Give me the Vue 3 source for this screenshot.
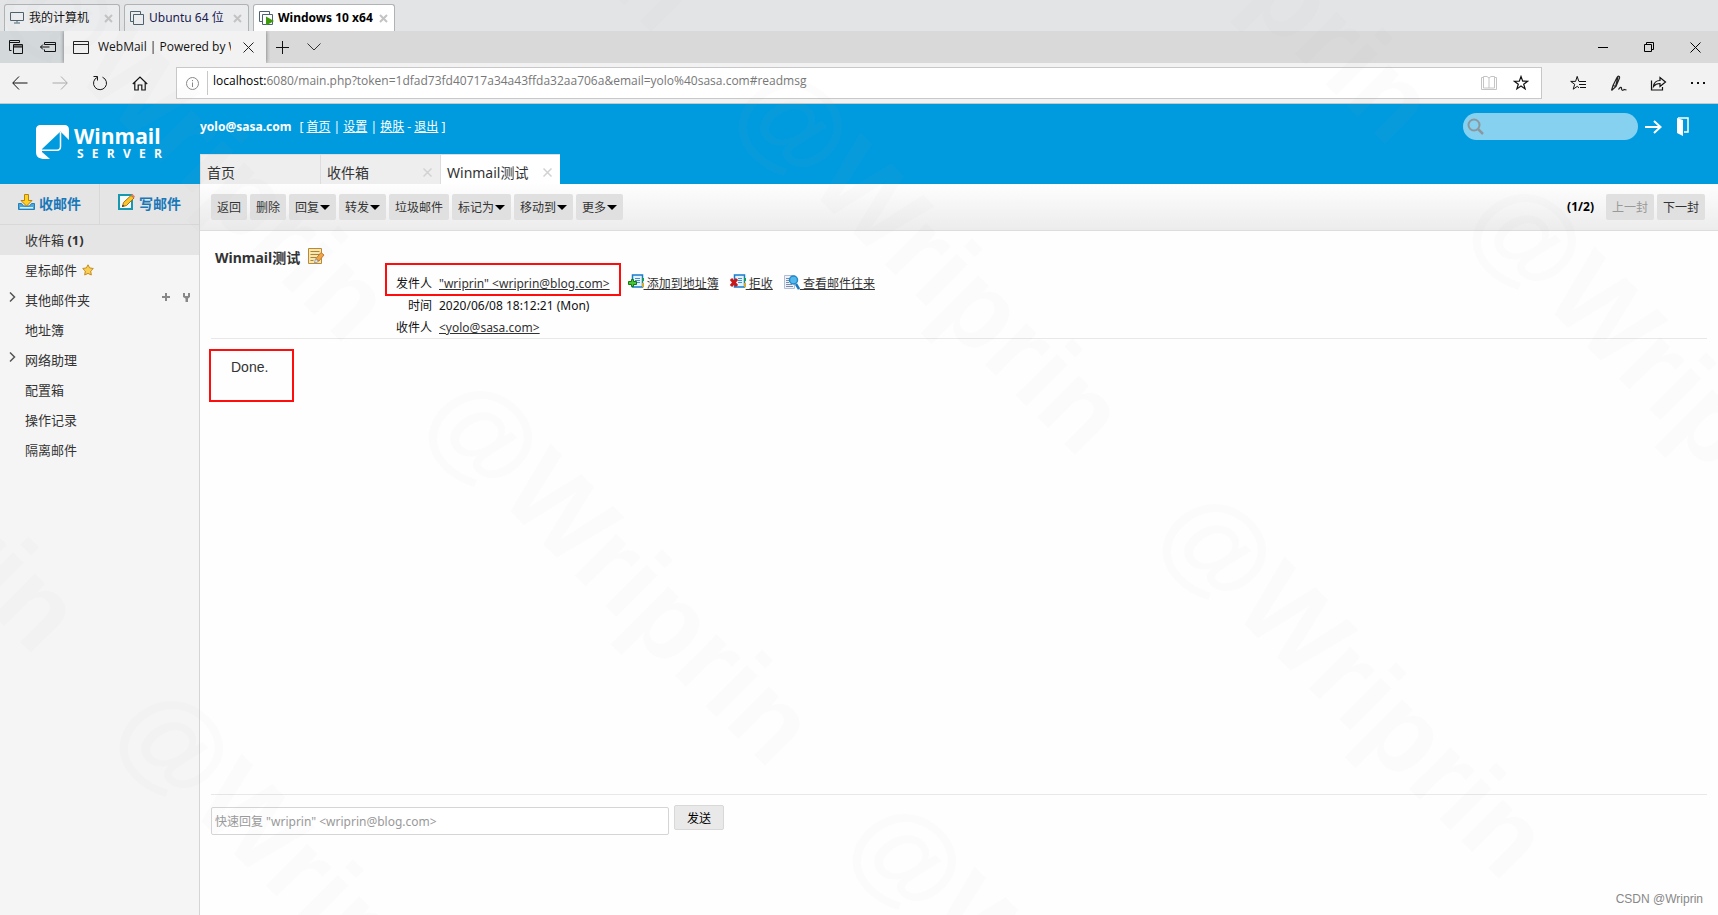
<script setup>

import { ref } from 'vue';

const vmTabs = [
    { name: '我的计算机', icon: 'monitor' },
    { name: 'Ubuntu 64 位', icon: 'vm' },
    { name: 'Windows 10 x64', icon: 'running', active: true }
];

const mailTabs = [
    { name: '首页' },
    { name: '收件箱', closable: true },
    { name: 'Winmail测试', closable: true, active: true }
];

const actions = [
    { name: '返回' },
    { name: '删除' },
    { name: '回复', menu: true },
    { name: '转发', menu: true },
    { name: '垃圾邮件' },
    { name: '标记为', menu: true },
    { name: '移动到', menu: true },
    { name: '更多', menu: true }
];

const folders = [
    { name: '收件箱', count: 1, active: true },
    { name: '星标邮件', star: true },
    { name: '其他邮件夹', expand: true, tools: true },
    { name: '地址簿' },
    { name: '网络助理', expand: true },
    { name: '配置箱' },
    { name: '操作记录' },
    { name: '隔离邮件' }
];

// origin of each diagonal stamp
const stamps = [
    [-4, -3], [306, -313], [1040, -201], [730, 110], [420, 421], [111, 731],
    [1464, 224], [1154, 534], [844, 844], [-314, 308]
];

const reply = ref('');
const search = ref('');

</script>

<template>

    <div class="screen">

        <!-- virtual machine tabs -->
        <nav class="vm-bar">
            <div v-for="tab in vmTabs" :key="tab.name" class="vm-tab" :class="{ active: tab.active }">
                <svg v-if="tab.icon === 'monitor'" width="15" height="14" viewBox="0 0 15 14" fill="none" stroke="#4d6270">
                    <path d="M.5 1.500h13v8h-13zM7 9.500v2M4 12h6" />
                </svg>
                <svg v-else width="15" height="14" viewBox="0 0 15 14" fill="none" stroke="#4d6270">
                    <path d="M3.500 10.500h-3v-10h10v3M3.500 3.500h10v10h-10z" />
                    <path v-if="tab.icon === 'running'" d="M7 5.500l8 4.500-8 4.500z" fill="#3d9b0c" stroke="none" />
                </svg>
                <a href="#">{{ tab.name }}</a>
                <button type="button" class="plain" aria-label="关闭">
                    <svg width="9" height="9" viewBox="0 0 9 9" stroke="#c3c3c3" stroke-width="2"><path d="M1 1l7 7M8 1L1 8" /></svg>
                </button>
            </div>
        </nav>

        <!-- browser tabs -->
        <div class="edge-tabs">
            <div class="edge-left">
                <svg width="15" height="15" viewBox="0 0 15 15" fill="none" stroke="#111">
                    <path d="M2.500 10.500h-2v-10h10v2M.5 2.500h10M4.500 13.500v-9h9v9zM4.500 7h9M4.500 6h9" />
                </svg>
                <svg width="16" height="12" viewBox="0 0 16 12" fill="none" stroke="#111">
                    <path d="M4.500 3.500v-2h11v9h-11v-2M4.500 3.500h11M.5 6h9M3 3.500L.5 6 3 8.500" />
                </svg>
            </div>
            <div class="edge-tab">
                <svg width="16" height="13" viewBox="0 0 16 13" fill="none" stroke="#222"><path d="M.5.5h15v12H.5zM.5 3.500h15" /></svg>
                <span class="edge-title">WebMail | Powered by Winmail</span>
                <button type="button" class="plain" aria-label="关闭标签页">
                    <svg width="11" height="11" viewBox="0 0 11 11" stroke="#222"><path d="M.5.5l10 10M10.500.5l-10 10" /></svg>
                </button>
            </div>
            <button type="button" class="plain new-tab" aria-label="新建标签页">
                <svg width="13" height="13" viewBox="0 0 13 13" stroke="#111"><path d="M6.500 0v13M0 6.500h13" /></svg>
            </button>
            <button type="button" class="plain more-tab" aria-label="标签页预览">
                <svg width="14" height="8" viewBox="0 0 14 8" fill="none" stroke="#333"><path d="M.5.5L7 7 13.500.5" /></svg>
            </button>
            <div class="window-buttons">
                <button type="button" class="plain" aria-label="最小化">
                    <svg width="10" height="10" viewBox="0 0 10 10" stroke="#000"><path d="M0 5.500h10" /></svg>
                </button>
                <button type="button" class="plain" aria-label="还原">
                    <svg width="10" height="10" viewBox="0 0 10 10" fill="none" stroke="#000"><path d="M.5 2.500h7v7h-7zM2.500 2V.5h7v7H8" /></svg>
                </button>
                <button type="button" class="plain" aria-label="关闭窗口">
                    <svg width="11" height="11" viewBox="0 0 11 11" stroke="#000"><path d="M.5.5l10 10M10.500.5l-10 10" /></svg>
                </button>
            </div>
        </div>

        <!-- address bar -->
        <div class="edge-nav">
            <div class="nav-left">
                <button type="button" class="plain" aria-label="后退">
                    <svg width="16" height="14" viewBox="0 0 16 14" fill="none" stroke="#111"><path d="M15.500 7H1M7 .5L.7 7 7 13.500" /></svg>
                </button>
                <button type="button" class="plain" aria-label="前进">
                    <svg width="16" height="14" viewBox="0 0 16 14" fill="none" stroke="#aaa"><path d="M.5 7H15M9 .5L15.300 7 9 13.500" /></svg>
                </button>
                <button type="button" class="plain" aria-label="刷新">
                    <svg width="16" height="16" viewBox="0 0 16 16" fill="none" stroke="#111"><path d="M10.500 2.200a6.500 6.500 0 1 1-5.200.1M1.500 1.500h4v4" /></svg>
                </button>
                <button type="button" class="plain" aria-label="主页">
                    <svg width="16" height="15" viewBox="0 0 16 15" fill="none" stroke="#111" stroke-width="1.200"><path d="M.8 8L8 1l7.200 7M2.800 6.500v7.500h3.400V9h3.600v5h3.400V6.500" /></svg>
                </button>
            </div>
            <div class="address">
                <svg class="info" width="13" height="13" viewBox="0 0 13 13" fill="none" stroke="#888"><circle cx="6.500" cy="6.500" r="6" /><path d="M6.500 5.500V10M6.500 3v1.200" /></svg>
                <div class="url"><span>localhost:</span>6080/main.php?token=1dfad73fd40717a34a43ffda32aa706a&amp;email=yolo%40sasa.com#readmsg</div>
                <svg width="16" height="15" viewBox="0 0 16 15" fill="none" stroke="#c4c4c4"><path d="M2.500 1.500H.5v12h15v-12h-2M8 2v10M2.500.5H6L8 2l2-1.500h3.500v11.500h-11z" /></svg>
                <svg class="fav" width="16" height="16" viewBox="0 0 16 16" fill="none" stroke="#111" stroke-width="1.200"><path d="M8 1.500l1.700 4.600 4.900.1-3.900 3 1.400 4.700L8 11.100l-4.100 2.800 1.400-4.700-3.900-3 4.900-.1z" /></svg>
            </div>
            <div class="nav-right">
                <button type="button" class="plain" aria-label="收藏夹">
                    <svg width="17" height="16" viewBox="0 0 17 16" fill="none" stroke="#111"><path d="M9 12.800l-1.800-1.400-4 2.800 1.500-4.900-4-2.900h4.900l1.600-5 1.600 5M9 6.500h7M9 9.500h7M10 12.500h6" /></svg>
                </button>
                <button type="button" class="plain" aria-label="添加笔记">
                    <svg width="17" height="17" viewBox="0 0 17 17" fill="none" stroke="#222" stroke-width="1.200"><path d="M1.500 15.500l1.500-5L7 2.500c1-2 3-1.500 2.500.5L6 11.500l-4.500 4M3 10.500l3 1M8 1.500L5.500 12M8.500 14.500c1.500-2.500 3-3 3-1s1.500 2.500 2.500 1l2.500.5" /></svg>
                </button>
                <button type="button" class="plain" aria-label="共享">
                    <svg width="17" height="15" viewBox="0 0 17 15" fill="none" stroke="#111" stroke-width="1.200"><path d="M1.500 4.500v9.500h11v-3M3.500 10.500c.5-4 3-6 6.500-6V1.500l5.500 4.500-5.500 4.500V7.500c-3 0-5 1-6.500 3z" /></svg>
                </button>
                <button type="button" class="plain" aria-label="设置及更多">
                    <svg width="15" height="3" viewBox="0 0 15 3" fill="#111"><path d="M0 0h2v2H0zM6 0h2v2H6zM12 0h2v2h-2z" /></svg>
                </button>
            </div>
        </div>

        <!-- mail header -->
        <header class="mail-header">
            <a class="logo" href="#" aria-label="Winmail Server">
                <svg width="34" height="34" viewBox="0 0 34 34">
                    <path fill="#fff" d="M5 0h23c3.500 0 5 1.500 5 5v10L24.500 6.500 6 24v3l8 7H9c-6 0-9-2-9-7V5c0-3.500 1.500-5 5-5z" />
                    <path fill="none" stroke="#fff" stroke-width="1.500" d="M24.500 7v14.500c0 2.500-1 3.700-3.500 3.700H6" />
                </svg>
                <span class="logo-text">
                    <b>Winmail</b>
                    <span class="server"><i v-for="(letter, index) in 'SERVER'" :key="index">{{ letter }}</i></span>
                </span>
            </a>
            <div class="header-main">
                <div class="account">
                    <b>yolo@sasa.com</b>
                    <span class="links">[ <a href="#">首页</a> | <a href="#">设置</a> | <a href="#">换肤</a> - <a href="#">退出</a> ]</span>
                </div>
                <div class="mail-tabs">
                    <div v-for="tab in mailTabs" :key="tab.name" class="mail-tab" :class="{ active: tab.active }">
                        <a href="#">{{ tab.name }}</a>
                        <button v-if="tab.closable" type="button" class="plain" aria-label="关闭">
                            <svg width="9" height="9" viewBox="0 0 9 9" stroke="#d2d2d2" stroke-width="1.500"><path d="M.5.5l8 8M8.500.5l-8 8" /></svg>
                        </button>
                    </div>
                </div>
            </div>
            <div class="header-tools">
                <label class="search">
                    <svg width="17" height="17" viewBox="0 0 17 17" fill="none" stroke="#8c98a0"><circle cx="7" cy="7" r="5.500" stroke-width="2" /><path d="M11 11l5 5" stroke-width="2.500" /></svg>
                    <input v-model="search" type="text" aria-label="搜索">
                </label>
                <button type="button" class="plain go" aria-label="搜索邮件">
                    <svg width="17" height="14" viewBox="0 0 17 14" fill="none" stroke="#fff" stroke-width="2"><path d="M0 7h15M9 1l6.500 6L9 13" /></svg>
                </button>
                <button type="button" class="plain" aria-label="退出登录">
                    <svg width="12" height="19" viewBox="0 0 12 19"><path fill="#fff" d="M0 1l6 2v16l-6-3z" /><path fill="none" stroke="#fff" stroke-width="1.500" d="M1 1h10v14H7" /></svg>
                </button>
            </div>
        </header>

        <div class="mail-body">

            <!-- folders -->
            <aside class="sidebar">
                <div class="main-actions">
                    <button type="button">
                        <svg width="17" height="17" viewBox="0 0 17 17">
                            <path fill="#4aa7dc" stroke="#2580b5" d="M.5 9.500h3l2 2.500h6l2-2.500h3v6H.5z" />
                            <path fill="#d7effb" d="M2 13h13v1.500H2z" />
                            <path fill="#ffcf24" stroke="#b98208" d="M6.500.5h4v6h3.500L8.500 12 3 6.500h3.500z" />
                        </svg>
                        <span>收邮件</span>
                    </button>
                    <button type="button">
                        <svg width="17" height="17" viewBox="0 0 17 17">
                            <path fill="#f4fbfd" stroke="#1598b0" stroke-width="2" d="M1 1h13v14H1z" />
                            <path fill="#f9c52b" stroke="#a8720d" d="M4.500 12.500l1-4L13 1.500l3 2.500-7.500 7.500z" />
                            <path fill="#333" d="M4 13l.6-2.300L6.500 12z" /><path fill="#e77b70" d="M13 1l1.500-1L17 2.500 16 4z" />
                        </svg>
                        <span>写邮件</span>
                    </button>
                </div>
                <ul class="folders">
                    <li v-for="folder in folders" :key="folder.name" :class="{ active: folder.active }">
                        <span class="expand">
                            <svg v-if="folder.expand" width="7" height="10" viewBox="0 0 7 10" fill="none" stroke="#555" stroke-width="1.500"><path d="M1 .5L5.500 5 1 9.500" /></svg>
                        </span>
                        <a href="#">{{ folder.name }}<b v-if="folder.count"> ({{ folder.count }})</b></a>
                        <svg v-if="folder.star" class="star" width="12" height="12" viewBox="0 0 12 12"><path fill="#f8cf52" stroke="#c58a1c" d="M6 .8l1.600 3.100 3.700.6-2.600 2.600.6 3.900L6 9.400 2.700 11l.6-3.900L.7 4.500l3.700-.6z" /></svg>
                        <span v-if="folder.tools" class="tools">
                            <svg width="8" height="8" viewBox="0 0 8 8" stroke="#888" stroke-width="2"><path d="M4 0v8M0 4h8" /></svg>
                            <svg width="7" height="9" viewBox="0 0 7 9" fill="#888"><path d="M0 0h2v3h3V0h2v4L5 5.500V9H2.500V5.500L0 4z" /></svg>
                        </span>
                    </li>
                </ul>
            </aside>

            <main class="content">

                <div class="toolbar">
                    <button v-for="action in actions" :key="action.name" type="button">{{ action.name }}<i v-if="action.menu" class="caret"></i></button>
                    <b class="page">(1/2)</b>
                    <button type="button" disabled>上一封</button>
                    <button type="button">下一封</button>
                </div>

                <section class="message-head">
                    <h1>
                        Winmail测试
                        <svg width="17" height="17" viewBox="0 0 17 17">
                            <path fill="#fae8ae" stroke="#b98a35" d="M.5.5h13v15H.5z" />
                            <path stroke="#ad8135" d="M2.500 3.500h9M2.500 6.500h9M2.500 9.500h6M2.500 12.500h3" />
                            <path fill="#f1a545" stroke="#c27a2c" d="M8 10.500l5-6 3 2.500-5 6z" /><path fill="#fff" stroke="#999" d="M7.500 11l3 2.500-4 1.500z" />
                        </svg>
                    </h1>
                    <dl>
                        <div class="row marked">
                            <dt>发件人</dt>
                            <dd><a href="#">"wriprin" &lt;wriprin@blog.com&gt;</a></dd>
                            <dd class="extras">
                                <a href="#">
                                    <svg width="16" height="15" viewBox="0 0 16 15"><path fill="#e3f3fd" stroke="#167ccc" stroke-width="1.500" d="M4.500 1h10v12h-10z" /><path stroke="#4a8fc7" d="M7 4.500h5M7 6.500h5M7 8.500h5" /><path fill="#16a04b" d="M14 4h2v3h-2z" /><path fill="#dba91c" d="M14 9h2v4h-2z" /><path fill="#48c638" stroke="#15780f" d="M3.500 5.500h2v2h3v3h-3v2h-2v-2h-3v-3h3z" /></svg><span>&nbsp;添加到地址簿</span>
                                </a>
                                <a href="#">
                                    <svg width="16" height="15" viewBox="0 0 16 15"><path fill="#e3f3fd" stroke="#167ccc" stroke-width="1.500" d="M4.500 1h10v12h-10z" /><path stroke="#4a8fc7" d="M8 4.500h4M8 6.500h4M8 8.500h4" /><path fill="#16a04b" d="M14 4h2v3h-2z" /><path fill="#dba91c" d="M14 9h2v4h-2z" /><path stroke="#c91818" stroke-width="3" d="M1 5l6 7M7 5l-6 7" /></svg><span>&nbsp;拒收</span>
                                </a>
                                <a href="#">
                                    <svg width="16" height="17" viewBox="0 0 16 17"><path fill="#eff2f8" stroke="#b2bdd3" d="M.5 1.500h10v13H.5z" /><path stroke="#7c8ba8" d="M2 4.500h3M2 6.500h3M2 8.500h3M2 10.500h6M2 12.500h7" /><circle cx="9.500" cy="6" r="4" fill="#55b8ed" stroke="#2589c9" stroke-width="1.500" /><path stroke="#1878c3" stroke-width="2.500" d="M12 10l3 5" /></svg><span>&nbsp;查看邮件往来</span>
                                </a>
                            </dd>
                        </div>
                        <div class="row">
                            <dt>时间</dt>
                            <dd>2020/06/08 18:12:21 (Mon)</dd>
                        </div>
                        <div class="row">
                            <dt>收件人</dt>
                            <dd><a href="#">&lt;yolo@sasa.com&gt;</a></dd>
                        </div>
                    </dl>
                </section>

                <div class="message-text">
                    <p>Done.</p>
                </div>

                <form class="reply" @submit.prevent>
                    <input v-model="reply" type="text" aria-label="快速回复" placeholder="快速回复 &quot;wriprin&quot; &lt;wriprin@blog.com&gt;">
                    <button type="submit">发送</button>
                </form>

                <footer>CSDN @Wriprin</footer>

            </main>
        </div>

        <svg class="stamps" aria-hidden="true">
            <text v-for="(stamp, index) in stamps" :key="index" :transform="`translate(${stamp[0]} ${stamp[1]}) rotate(45)`">@Wriprin</text>
        </svg>

    </div>

</template>

<style>
body {
    margin: 0;
}
</style>

<style scoped>
.screen {
    position: relative;
    display: flex;
    flex-direction: column;
    min-height: 100vh;
    overflow: hidden;
    background: #fefefe;
    color: #333;
    font: 12px/20px "Noto Sans", "Noto Sans CJK SC", sans-serif;
}

.screen *,
.screen {
    box-sizing: border-box;
}

svg {
    flex: none;
    display: block;
}

a {
    color: inherit;
    text-decoration: none;
}

button,
input {
    font: inherit;
    color: inherit;
}

.plain {
    display: flex;
    align-items: center;
    justify-content: center;
    padding: 0;
    border: 0;
    background: none;
}

/* vm tabs */

.vm-bar {
    display: flex;
    align-items: flex-end;
    gap: 4px;
    height: 31px;
    padding-left: 4px;
    background: #e3e4e6;
}

.vm-tab {
    display: flex;
    align-items: center;
    gap: 4px;
    width: 116px;
    height: 27px;
    padding: 0 6px 0 5px;
    border: 1px solid #b0b3b5;
    border-bottom: 0;
    border-radius: 3px 3px 0 0;
    background: #ebecee;
    color: #111;
    white-space: nowrap;
}

.vm-tab:nth-child(2) {
    width: 125px;
    color: #1a1a50;
}

.vm-tab .plain {
    margin-left: auto;
}

.vm-tab.active {
    width: 142px;
    background: #fff;
    color: #000;
    font-weight: bold;
}

/* browser tabs */

.edge-tabs {
    display: flex;
    height: 32px;
    background: #d9d9d9;
}

.edge-left {
    display: flex;
    align-items: center;
    gap: 16px;
    width: 64px;
    padding-left: 9px;
    background: #d3d8db;
}

.edge-tab {
    display: flex;
    align-items: center;
    width: 202px;
    padding: 0 12px 0 9px;
    background: #f2f2f2;
    box-shadow: 0 0 4px rgba(0, 0, 0, 0.5);
    clip-path: inset(0 -4px);
}

.edge-title {
    flex: 1;
    margin: 0 12px 0 9px;
    overflow: hidden;
    white-space: nowrap;
    color: #111;
    font-family: "Open Sans", sans-serif;
}

.new-tab {
    width: 32px;
}

.more-tab {
    width: 32px;
}

.window-buttons {
    display: flex;
    margin-left: auto;
}

.window-buttons button {
    width: 46px;
}

/* address bar */

.edge-nav {
    display: flex;
    align-items: center;
    height: 41px;
    border-bottom: 1px solid #c8c8c8;
    background: #f2f2f2;
}

.nav-left {
    display: flex;
    width: 176px;
}

.nav-left button,
.nav-right button {
    width: 40px;
    height: 32px;
}

.address {
    display: flex;
    flex: 1;
    align-items: center;
    gap: 16px;
    height: 32px;
    min-width: 0;
    padding: 0 12px 0 9px;
    border: 1px solid #c8c8c8;
    background: #fff;
}

.url {
    flex: 1;
    min-width: 0;
    height: 24px;
    margin-left: -8px;
    padding-left: 5px;
    overflow: hidden;
    border-left: 1px solid #c8c8c8;
    white-space: nowrap;
    color: #777;
    font-family: "Open Sans", sans-serif;
}

.url span {
    color: #000;
}

.nav-right {
    display: flex;
    margin-left: 16px;
}

/* mail header */

.mail-header {
    display: flex;
    height: 80px;
    background: #009bde;
    color: #fff;
}

.logo {
    display: flex;
    gap: 4px;
    width: 200px;
    padding: 21px 0 0 36px;
}

.logo-text {
    width: 88px;
    font-family: "Open Sans", sans-serif;
}

.logo-text b {
    display: block;
    font-size: 21px;
    line-height: 22px;
}

.server {
    display: flex;
    justify-content: space-between;
    padding-left: 3px;
    font-size: 12px;
    font-weight: bold;
    line-height: 14px;
}

.server i {
    font-style: normal;
}

.header-main {
    display: flex;
    flex: 1;
    flex-direction: column;
    justify-content: space-between;
}

.account {
    display: flex;
    gap: 8px;
    padding-top: 13px;
}

.links a {
    text-decoration: underline;
}

.mail-tabs {
    display: flex;
    height: 30px;
}

.mail-tab {
    display: flex;
    align-items: center;
    justify-content: space-between;
    width: 120px;
    padding: 6px 8px 0 6px;
    border: 1px solid #ddd;
    border-width: 1px 0 0 1px;
    background: #eee;
    color: #333;
    font-size: 14px;
}

.mail-tab.active {
    background: #fff;
}

.header-tools {
    display: flex;
    align-items: flex-start;
    padding: 9px 29px 0 0;
}

.search {
    display: flex;
    align-items: center;
    width: 175px;
    height: 27px;
    padding: 0 10px 0 4px;
    border-radius: 14px;
    background: #86d1f0;
}

.search input {
    width: 100%;
    border: 0;
    outline: 0;
    background: none;
}

.header-tools button {
    height: 27px;
}

.header-tools .go {
    margin: 0 15px 0 7px;
}

/* body */

.mail-body {
    display: flex;
    flex: 1;
}

.sidebar {
    width: 200px;
    border-right: 1px solid #d5d5d5;
    background: #f5f5f5;
}

.main-actions {
    display: flex;
    height: 41px;
    border-bottom: 1px solid #d8d8d8;
    background: #e5e5e5;
}

.main-actions button {
    display: flex;
    flex: 1;
    align-items: center;
    justify-content: center;
    gap: 4px;
    padding: 0 0 4px;
    border: 0;
    background: none;
    color: #1878b8;
    font-size: 14px;
    font-weight: bold;
}

.main-actions span {
    padding-top: 4px;
}

.main-actions button + button {
    border-left: 1px solid #d8d8d8;
}

.folders {
    margin: 0;
    padding: 0;
    list-style: none;
    font-size: 13px;
}

.folders li {
    display: flex;
    align-items: center;
    height: 30px;
    padding-right: 9px;
}

.folders .active {
    background: #e5e5e5;
}

.expand {
    width: 25px;
    padding: 0 0 6px 9px;
}

.star {
    margin-left: 5px;
}

.tools {
    display: flex;
    align-items: center;
    gap: 13px;
    margin-left: auto;
    padding-bottom: 6px;
}

.content {
    display: flex;
    flex: 1;
    flex-direction: column;
    min-width: 0;
}

/* toolbar */

.toolbar {
    display: flex;
    align-items: center;
    gap: 3px;
    height: 47px;
    padding: 0 13px 0 11px;
    border-bottom: 1px solid #ddd;
    background: linear-gradient(#fefefe, #ececec);
}

.toolbar button {
    display: flex;
    align-items: center;
    height: 26px;
    padding: 2px 6px 0;
    border: 0;
    border-radius: 2px;
    background: #e0e0e0;
    white-space: nowrap;
}

.toolbar button:disabled {
    color: #999;
}

.caret {
    margin: 0 0 2px 1px;
    border: 5px solid transparent;
    border-top-color: #000;
    border-bottom: 0;
}

.page {
    margin: 0 9px 0 auto;
    color: #000;
}

/* message */

.message-head {
    margin: 0 11px;
    padding-top: 11px;
    border-bottom: 1px solid #e8e8e8;
}

h1 {
    display: flex;
    align-items: center;
    gap: 8px;
    margin: 0;
    padding: 2px 0 0 4px;
    font-size: 14px;
    line-height: 28px;
}

h1 svg {
    margin-bottom: 4px;
}

dl {
    margin: 0;
}

.row {
    position: relative;
    display: flex;
    align-items: center;
    height: 22px;
    margin-left: 174px;
    padding-top: 2px;
    color: #111;
}

.row dt {
    width: 47px;
    text-align: right;
}

.row dd {
    margin: 0 0 0 7px;
}

.row a {
    color: #333;
    text-decoration: underline;
}

.marked::before {
    content: "";
    position: absolute;
    top: -9px;
    left: 0;
    box-sizing: border-box;
    width: 236px;
    height: 33px;
    border: 2px solid #ff0d0d;
}

.row .extras {
    display: flex;
    gap: 11px;
    margin-left: 18px;
}

.extras a {
    display: flex;
    text-decoration: none;
}

.extras span {
    text-decoration: underline;
}

.message-text {
    flex: 1;
    margin-left: 9px;
    padding-top: 10px;
}

.message-text p {
    width: 85px;
    height: 53px;
    margin: 0;
    padding: 6px 20px;
    border: 2px solid #ff0d0d;
    font: 14px/20px "Liberation Sans", sans-serif;
}

.reply {
    display: flex;
    gap: 5px;
    margin: 0 11px;
    padding-top: 10px;
    border-top: 1px solid #e8e8e8;
}

.reply input {
    width: 458px;
    height: 28px;
    margin-top: 2px;
    padding: 0 3px;
    border: 1px solid #d5d5d5;
    border-radius: 2px;
    background: #fff;
}

.reply input::placeholder {
    color: #999;
}

.reply button {
    width: 50px;
    height: 25px;
    padding: 2px 0 0;
    border: 1px solid #d8d8d8;
    border-radius: 2px;
    background: #e9e9e9;
    color: #000;
}

footer {
    margin-top: 54px;
    padding: 0 15px 6px;
    text-align: right;
    color: #888;
    font: 12px/20px "Liberation Sans", sans-serif;
}

/* diagonal stamps over the whole screen */

.stamps {
    position: absolute;
    inset: 0;
    width: 100%;
    height: 100%;
    pointer-events: none;
    fill: rgba(170, 170, 170, 0.04);
    font: bold 111px "Liberation Sans", sans-serif;
}
</style>
